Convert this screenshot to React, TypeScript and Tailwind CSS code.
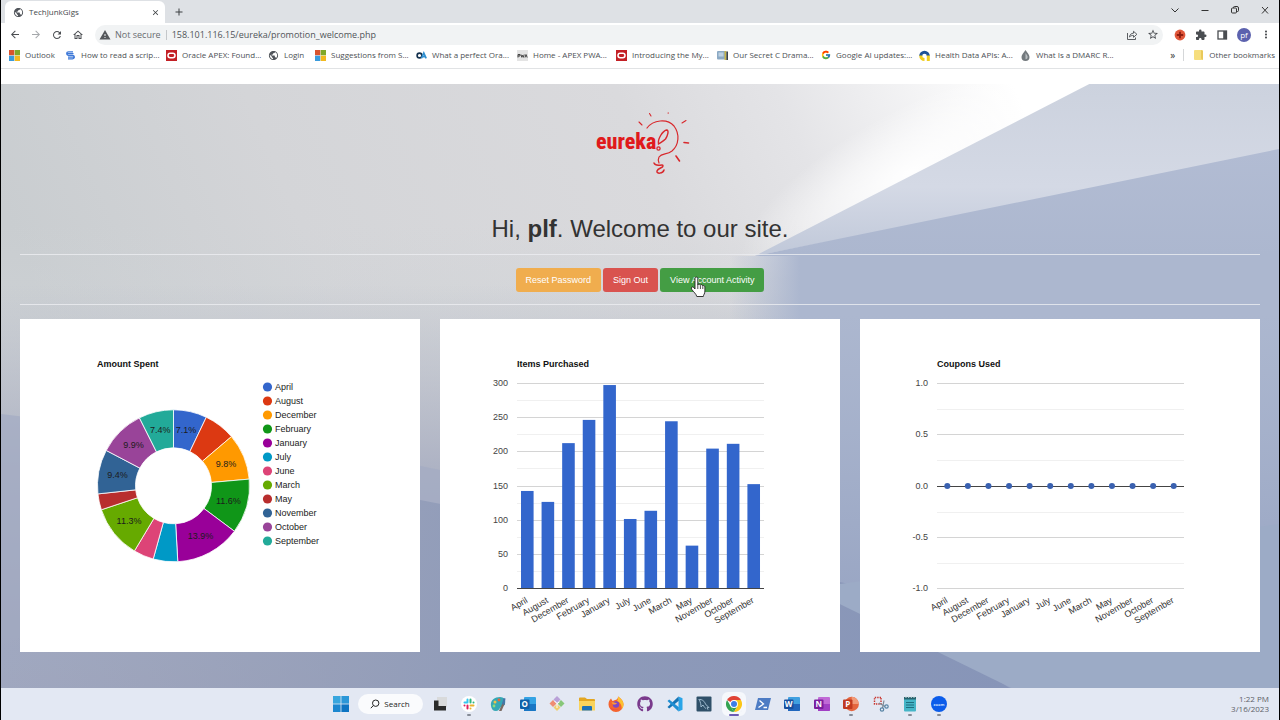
import * as React from "react";
import {
  MdAdd,
  MdArrowBack,
  MdArrowForward,
  MdClose,
  MdExtension,
  MdMoreVert,
  MdOutlineHome,
  MdPublic,
  MdRefresh,
  MdStarBorder,
  MdWarning,
} from "react-icons/md";
import { FcGoogle } from "react-icons/fc";
import { FaGithub } from "react-icons/fa";

const MONTHS = [
  { name: "April", share: 7.1, label: true, items: 142, color: "#3366cc" },
  { name: "August", share: 6.7, label: false, items: 126, color: "#dc3912" },
  { name: "December", share: 9.8, label: true, items: 212, color: "#ff9900" },
  { name: "February", share: 11.6, label: true, items: 246, color: "#109618" },
  { name: "January", share: 13.9, label: true, items: 297, color: "#990099" },
  { name: "July", share: 5.2, label: false, items: 101, color: "#0099c6" },
  { name: "June", share: 4.3, label: false, items: 113, color: "#dd4477" },
  { name: "March", share: 11.3, label: true, items: 244, color: "#66aa00" },
  { name: "May", share: 3.4, label: false, items: 62, color: "#b82e2e" },
  { name: "November", share: 9.4, label: true, items: 204, color: "#316395" },
  { name: "October", share: 9.9, label: true, items: 211, color: "#994499" },
  { name: "September", share: 7.4, label: true, items: 152, color: "#22aa99" },
];

/* Browser chrome */
function IconButton({ label, children }: { label: string; children: React.ReactNode }) {
  return (
    <button type="button" aria-label={label} className="flex size-3 shrink-0 items-center justify-center">
      {children}
    </button>
  );
}

function TabStrip() {
  return (
    <div className="flex h-[23px] items-end justify-between bg-[#dee1e5] pl-1">
      <div className="flex items-center">
        <div className="flex h-[22px] w-40 items-center rounded-t-md bg-white pr-1 pl-2">
          <MdPublic className="size-[11px] shrink-0 text-[#50545a]" />
          <span className="ml-[5px] flex-1 text-[8px] text-[#45494d]">TechJunkGigs</span>
          <IconButton label="Close tab">
            <MdClose className="size-[9px] text-[#3c4043]" />
          </IconButton>
        </div>
        <div className="ml-2">
          <IconButton label="New tab">
            <MdAdd className="size-3 text-[#3c4043]" />
          </IconButton>
        </div>
      </div>
      <div className="flex h-full items-center gap-[18px] pr-2 pb-1 text-[#333]">
        <IconButton label="Search tabs">
          <svg viewBox="0 0 12 12" className="size-3" fill="none" stroke="currentColor">
            <path d="M2.500 4.500 6 8l3.500-3.500" />
          </svg>
        </IconButton>
        <IconButton label="Minimize">
          <svg viewBox="0 0 12 12" className="size-3" fill="none" stroke="currentColor">
            <path d="M2.500 6.500h7" />
          </svg>
        </IconButton>
        <IconButton label="Restore">
          <svg viewBox="0 0 12 12" className="size-3" fill="none" stroke="currentColor">
            <rect x="2.500" y="4" width="5" height="5" rx="1" />
            <path d="M4.500 4V3.500a1 1 0 0 1 1-1h2.500a1.500 1.500 0 0 1 1.500 1.500v2.500a1 1 0 0 1-1 1H8" />
          </svg>
        </IconButton>
        <IconButton label="Close window">
          <svg viewBox="0 0 12 12" className="size-3" fill="none" stroke="currentColor">
            <path d="m3 3 6 6.500M9 3 3 9.500" />
          </svg>
        </IconButton>
      </div>
    </div>
  );
}

function Toolbar() {
  return (
    <div className="flex h-[23px] items-center gap-[9px] pr-[7px] pl-2 text-[#4a4d51]">
      <IconButton label="Back">
        <MdArrowBack className="size-[13px]" />
      </IconButton>
      <IconButton label="Forward">
        <MdArrowForward className="size-[13px] text-[#a5a8ab]" />
      </IconButton>
      <IconButton label="Reload">
        <MdRefresh className="size-3.5" />
      </IconButton>
      <IconButton label="Home">
        <MdOutlineHome className="size-3.5" />
      </IconButton>
      <div className="ml-0.5 flex h-5 flex-1 items-center rounded-full bg-[#f1f3f4] pr-1 pl-1">
        <MdWarning className="size-3 shrink-0 text-[#55585c]" />
        <label htmlFor="url" className="ml-1 shrink-0 border-r border-[#c4c7ca] pr-[5px] text-[9px] leading-[10px] text-[#686c70]">
          Not secure
        </label>
        <input
          id="url"
          type="text"
          defaultValue="158.101.116.15/eureka/promotion_welcome.php"
          className="min-w-0 flex-1 bg-transparent pl-[5px] text-[9px] text-[#505458] outline-none"
        />
        <div className="flex gap-[9px]">
          <IconButton label="Share">
            <svg viewBox="0 0 12 12" className="size-3" fill="none" stroke="currentColor" strokeWidth="0.900">
              <path d="M1.500 4v6.500h8V8.500" />
              <path d="M3.500 8c.3-2.500 1.700-3.700 4-3.800V2.300l3.400 3-3.400 3V6.400C5.800 6.400 4.500 6.800 3.500 8z" />
            </svg>
          </IconButton>
          <IconButton label="Bookmark this tab">
            <MdStarBorder className="size-[13px]" />
          </IconButton>
        </div>
      </div>
      <div className="ml-0.5 flex items-center gap-[9px]">
        <IconButton label="Blocker extension">
          <svg viewBox="0 0 12 12" className="size-3">
            <circle cx="6" cy="6" r="5.400" fill="#e0573a" />
            <path d="M6 2.800v6.400M2.800 6h6.400" stroke="#8e1c10" strokeWidth="1.800" />
          </svg>
        </IconButton>
        <IconButton label="Extensions">
          <MdExtension className="size-3" />
        </IconButton>
        <IconButton label="Side panel">
          <svg viewBox="0 0 12 12" className="size-3">
            <rect x="2" y="2" width="8.500" height="8" fill="none" stroke="currentColor" strokeWidth="1.300" />
            <path d="M7.200 2h3.300v8H7.200z" fill="currentColor" />
          </svg>
        </IconButton>
        <button type="button" className="size-3.5 shrink-0 rounded-full bg-[#5c62ae] text-[8px] leading-[13px] text-white">
          pf
        </button>
        <IconButton label="Menu">
          <MdMoreVert className="size-[13px]" />
        </IconButton>
      </div>
    </div>
  );
}

const MicrosoftIcon = () => (
  <svg viewBox="0 0 11 11" className="size-[11px]">
    <path d="M0 0h5.300v5.300H0z" fill="#d9532c" />
    <path d="M5.700 0H11v5.300H5.700z" fill="#7fa82a" />
    <path d="M0 5.700h5.300V11H0z" fill="#3a9bdc" />
    <path d="M5.700 5.700H11V11H5.700z" fill="#f2b91f" />
  </svg>
);

const OracleIcon = () => (
  <svg viewBox="0 0 11 11" className="size-[11px]">
    <path d="M0 0h11v11H0z" fill="#c32025" />
    <rect x="2" y="3.300" width="7" height="4.400" rx="2.200" fill="none" stroke="#fff" strokeWidth="1.500" />
  </svg>
);

const BOOKMARKS: { text: string; width: string; icon: React.ReactNode }[] = [
  { text: "Outlook", width: "w-14", icon: <MicrosoftIcon /> },
  {
    text: "How to read a scrip...",
    width: "w-[101px]",
    icon: (
      <svg viewBox="0 0 11 11" className="size-[11px]" fill="none" stroke="#3d78d8" strokeWidth="1.300">
        <path d="M8 1.800H3.500a1.700 1.700 0 0 0 0 3.500h4a1.700 1.700 0 0 1 0 3.500H3M1.500 3.600h7M3 7.200h7" />
      </svg>
    ),
  },
  { text: "Oracle APEX: Found...", width: "w-[102px]", icon: <OracleIcon /> },
  { text: "Login", width: "w-[47px]", icon: <MdPublic className="size-[11px] text-[#50545a]" /> },
  { text: "Suggestions from S...", width: "w-[101px]", icon: <MicrosoftIcon /> },
  {
    text: "What a perfect Ora...",
    width: "w-[101px]",
    icon: (
      <svg viewBox="0 0 11 11" className="size-[11px]" fill="none" strokeWidth="1.600">
        <circle cx="3.500" cy="5.500" r="2.400" stroke="#15324f" />
        <path d="M5.500 8.300 7.800 3l2.400 5.300M6.500 6.600h2.800" stroke="#2f8fd0" />
      </svg>
    ),
  },
  {
    text: "Home - APEX PWA...",
    width: "w-[99px]",
    icon: (
      <svg viewBox="0 0 11 11" className="size-[11px]">
        <path d="M0 0h11v11H0z" fill="#e4e4e4" />
        <path d="M1 7.500v-3h2v1.500H1M4 4.500l.8 2.800.8-2 .8 2 .8-2.800M8 7.500l1-3 1.200 3" fill="none" stroke="#444" />
      </svg>
    ),
  },
  { text: "Introducing the My...", width: "w-[101px]", icon: <OracleIcon /> },
  {
    text: "Our Secret C Drama...",
    width: "w-[103px]",
    icon: (
      <svg viewBox="0 0 11 11" className="size-[11px]">
        <rect y="1" width="8.500" height="8.500" rx="1" fill="#8ba9c4" />
        <path d="M1.500 2.500h5v4h-5z" fill="#bcd0e2" />
        <path d="M7.500 1h1.800v9H7.500z" fill="#c6b54a" />
        <path d="M9.300 1.500H11v8.500H9.300z" fill="#39434d" />
      </svg>
    ),
  },
  { text: "Google AI updates:...", width: "w-[99px]", icon: <FcGoogle className="size-[10px]" /> },
  {
    text: "Health Data APIs: A...",
    width: "w-[101px]",
    icon: (
      <svg viewBox="0 0 11 11" className="size-[11px]" fill="none" strokeWidth="3">
        <path d="M1.700 6a3.800 3.800 0 0 1 7.600 0" stroke="#1d5297" />
        <path d="M1.700 5.500c0 2.400 1.600 4 3.800 4M9.300 5.500V11" stroke="#f0cd1e" />
      </svg>
    ),
  },
  {
    text: "What Is a DMARC R...",
    width: "w-[110px]",
    icon: (
      <svg viewBox="0 0 11 11" className="size-[11px]">
        <path d="M5.500 0C7 2.600 9.500 4.500 9.500 7a4 4 0 0 1-8 0C1.500 4.500 4 2.600 5.500 0z" fill="#747a7e" />
        <path d="M5.500 3c.8 1.400 2.200 2.500 2.200 4a2.200 2.200 0 0 1-2.200 2.200z" fill="#b9bec1" />
      </svg>
    ),
  },
];

function BookmarkBar() {
  return (
    <nav aria-label="Bookmarks" className="flex h-[23px] items-center border-b border-[#e1e3e5] pb-1 pl-2 text-[8px] text-[#4c5054]">
      {BOOKMARKS.map((b) => (
        <a key={b.text} href="#" className={`flex shrink-0 items-center gap-[5px] whitespace-nowrap ${b.width}`}>
          <span className="flex w-[11px] justify-center">{b.icon}</span>
          {b.text}
        </a>
      ))}
      <button type="button" className="ml-auto pr-2 text-[10px] leading-3 text-[#333]">
        »
      </button>
      <a href="#" className="flex shrink-0 items-center gap-1.5 border-l border-[#d5d7d9] pr-1 pl-2.5 whitespace-nowrap">
        <svg viewBox="0 0 9 10" className="h-2.5 w-[9px]">
          <rect width="9" height="10" rx="1" fill="#f6de7e" />
          <path d="M7 0v8.500L9 10V1z" fill="#e9c95a" />
        </svg>
        Other bookmarks
      </a>
    </nav>
  );
}

/* Page */
function Wallpaper() {
  return (
    <svg aria-hidden viewBox="0 0 1280 604" preserveAspectRatio="none" className="absolute inset-0 size-full">
      <defs>
        <linearGradient id="silver" x1="0" y1="0.200" x2="1" y2="0">
          <stop offset="0" stopColor="#c9cdd0" />
          <stop offset="0.220" stopColor="#d4d5d8" />
          <stop offset="0.500" stopColor="#dadadd" />
          <stop offset="0.620" stopColor="#e4e4e7" />
          <stop offset="0.800" stopColor="#ffffff" />
        </linearGradient>
        <radialGradient
          id="glow"
          gradientUnits="userSpaceOnUse"
          cx="0"
          cy="0"
          r="1"
          gradientTransform="translate(910 88) rotate(-29) scale(190 62)"
        >
          <stop offset="0" stopColor="#fff" stopOpacity="0.950" />
          <stop offset="0.500" stopColor="#fff" stopOpacity="0.550" />
          <stop offset="1" stopColor="#fff" stopOpacity="0" />
        </radialGradient>
        <linearGradient id="light" x1="0" y1="0" x2="0" y2="1">
          <stop offset="0" stopColor="#ccd2de" />
          <stop offset="0.600" stopColor="#d4d9e5" />
          <stop offset="1" stopColor="#c0c8d9" />
        </linearGradient>
        <linearGradient id="dusk" x1="0" y1="0" x2="0" y2="1">
          <stop offset="0" stopColor="#b2bcd3" />
          <stop offset="1" stopColor="#acb7cf" />
        </linearGradient>
        <linearGradient id="haze" x1="0" y1="0" x2="0" y2="1">
          <stop offset="0" stopColor="#cfd3d7" stopOpacity="0" />
          <stop offset="0.250" stopColor="#cfd3d7" stopOpacity="0.600" />
        </linearGradient>
        <linearGradient id="fade" x1="0" y1="0" x2="0" y2="1">
          <stop offset="0" stopColor="#b4b8c6" stopOpacity="0" />
          <stop offset="0.450" stopColor="#aeb3c4" />
          <stop offset="1" stopColor="#989eb5" />
        </linearGradient>
        <linearGradient id="side" gradientUnits="userSpaceOnUse" x1="730" y1="0" x2="800" y2="0">
          <stop offset="0" stopColor="#acb7cf" stopOpacity="0" />
          <stop offset="1" stopColor="#acb7cf" />
        </linearGradient>
        <linearGradient id="shade" x1="0" y1="0" x2="0" y2="1">
          <stop offset="0" stopColor="#98a5c3" stopOpacity="0" />
          <stop offset="1" stopColor="#929fbf" />
        </linearGradient>
        <linearGradient id="floor" x1="0" y1="0" x2="1" y2="0">
          <stop offset="0" stopColor="#989db3" stopOpacity="0" />
          <stop offset="0.500" stopColor="#8f9bb9" />
          <stop offset="1" stopColor="#8795b8" />
        </linearGradient>
      </defs>
      <path d="M0 0h1280v604H0z" fill="url(#silver)" />
      <path d="M0 140h1280v464H0z" fill="url(#haze)" />
      <path d="M600 0h680v235H600z" fill="url(#glow)" />
      <path d="M0 200h1280v404H0z" fill="url(#fade)" />
      <path d="M755 172 1090 0h190v70z" fill="url(#light)" />
      <path d="M755 172 1280 65v107z" fill="url(#dusk)" />
      <path d="M720 172h560v432H720z" fill="url(#side)" />
      <path d="M755 230h525v374H755z" fill="url(#shade)" />
      <path d="M0 330 420 382l335 66v156H0z" fill="#a3abc3" fillOpacity="0.700" />
      <path d="M0 560 420 416l430 84 160 104H0z" fill="url(#floor)" />
      <path d="m840 500 440-60v164h-268L840 520z" fill="#9cabc6" />
    </svg>
  );
}

function EurekaLogo() {
  return (
    <svg role="img" aria-label="eureka" viewBox="0 0 96 62" className="h-[62px] w-24 overflow-visible">
      <text
        x="4"
        y="37"
        fill="#e01a1c"
        fontSize="22"
        fontWeight="800"
        fontFamily="'Liberation Sans Narrow', 'Roboto Condensed', Roboto, sans-serif"
      >
        eureka
      </text>
      <g fill="none" stroke="#d8282c" strokeLinecap="round">
        <path d="M55 16C61 8 75 6 82 14c6 8 5 19-2 25-5 4-10 2-13 6-1 2-1 4 0 6" strokeWidth="1.200" />
        <path d="M66.500 32c-1-5 4-13 8-14 3 0 1 6-1 9-2 2-4 3-7 5z" strokeWidth="1.400" />
        <circle cx="66.500" cy="36.500" r="1.600" strokeWidth="1.300" />
        <path d="M62 51c2 5 9 0 9 3 0 2-5 2-6 5-1 3 6 3 7-1" strokeWidth="1.500" />
        <path d="m47 10 3 3M57.500 1.500 59 4M76 1h.5M90 11l4-2.500" strokeWidth="1.100" />
        <path d="m84 44 3.500 5M92 30.500l4.500.5" strokeWidth="1.600" />
      </g>
    </svg>
  );
}

function HandCursor() {
  return (
    <svg aria-hidden viewBox="0 0 16 22" className="pointer-events-none absolute top-2 left-[30px] h-[22px] w-4">
      <path
        d="M5 13V2.500a1.400 1.400 0 0 1 2.800 0V9c.2-1.300 2.500-1.200 2.600.3.400-1 2.300-.8 2.400.6.500-.7 2.100-.4 2.100 1V15c0 3-1.400 3.500-1.600 5.500H6.800C6.300 18 3.500 16 1.600 13.200.6 11.500 2.300 10.300 3.400 11.300z"
        fill="#fff"
        stroke="#222"
        strokeWidth="0.900"
      />
      <path d="M7.800 9v4M10.400 9.500v3.500M12.800 10.200V13" stroke="#222" strokeWidth="0.800" />
    </svg>
  );
}

function ChartCard({ title, children }: { title: string; children: React.ReactNode }) {
  return (
    <section className="bg-white">
      <svg
        role="img"
        aria-label={title}
        viewBox="0 0 400 333"
        className="w-full text-[9px]"
        fontFamily="'Liberation Sans', Arial, sans-serif"
      >
        <text x="77" y="48" fontWeight="700" fill="#111">
          {title}
        </text>
        {children}
      </svg>
    </section>
  );
}

function polar(cx: number, cy: number, r: number, share: number) {
  const a = (share / 100) * Math.PI * 2;
  return [cx + r * Math.sin(a), cy - r * Math.cos(a)];
}

function DonutChart() {
  const cx = 153.5;
  const cy = 166.8;
  let start = 0;
  return (
    <ChartCard title="Amount Spent">
      {MONTHS.map((m) => {
        const end = start + m.share;
        const [x1, y1] = polar(cx, cy, 76, start);
        const [x2, y2] = polar(cx, cy, 76, end);
        const [x3, y3] = polar(cx, cy, 38, end);
        const [x4, y4] = polar(cx, cy, 38, start);
        const [tx, ty] = polar(cx, cy, 57, start + m.share / 2);
        start = end;
        return (
          <g key={m.name}>
            <path
              d={`M${x1} ${y1}A76 76 0 0 1 ${x2} ${y2}L${x3} ${y3}A38 38 0 0 0 ${x4} ${y4}z`}
              fill={m.color}
              stroke="#fff"
              strokeWidth="0.800"
            />
            {m.label && (
              <text x={tx} y={ty + 3} textAnchor="middle" fill="#1c1c1c">
                {m.share.toFixed(1)}%
              </text>
            )}
          </g>
        );
      })}
      {MONTHS.map((m, i) => (
        <g key={m.name}>
          <circle cx="247.500" cy={68 + i * 14} r="4.600" fill={m.color} />
          <text x="255" y={71 + i * 14} fill="#222">
            {m.name}
          </text>
        </g>
      ))}
    </ChartCard>
  );
}

const PLOT = { left: 77, right: 324, top: 64, bottom: 269 };
const STEP = (PLOT.right - PLOT.left) / MONTHS.length;

function Axes({ ticks, zeroIndex }: { ticks: string[]; zeroIndex: number }) {
  const gap = (PLOT.bottom - PLOT.top) / (ticks.length - 1);
  return (
    <g>
      {ticks.map((t, i) => {
        const y = Math.round(PLOT.top + gap * i);
        return (
          <g key={t}>
            <path d={`M${PLOT.left} ${y + 0.5}H${PLOT.right}`} stroke={i === zeroIndex ? "#444" : "#d4d4d4"} />
            {i < ticks.length - 1 && (
              <path d={`M${PLOT.left} ${Math.round(y + gap / 2) + 0.5}H${PLOT.right}`} stroke="#f0f0f0" />
            )}
            <text x="68" y={y + 3} textAnchor="end" fill="#444">
              {t}
            </text>
          </g>
        );
      })}
      {MONTHS.map((m, i) => {
        const x = PLOT.left + STEP * (i + 0.5) + 1;
        return (
          <text key={m.name} x={x} y="283" textAnchor="end" fill="#333" transform={`rotate(-30 ${x} 283)`}>
            {m.name}
          </text>
        );
      })}
    </g>
  );
}

function BarChart() {
  const scale = (PLOT.bottom - PLOT.top) / 300;
  return (
    <ChartCard title="Items Purchased">
      <Axes ticks={["300", "250", "200", "150", "100", "50", "0"]} zeroIndex={6} />
      {MONTHS.map((m, i) => (
        <rect
          key={m.name}
          x={PLOT.left + STEP * (i + 0.5) - 6.3}
          y={PLOT.bottom - m.items * scale}
          width="12.600"
          height={m.items * scale}
          fill="#3366cc"
        />
      ))}
    </ChartCard>
  );
}

function LineChart() {
  return (
    <ChartCard title="Coupons Used">
      <Axes ticks={["1.0", "0.5", "0.0", "-0.5", "-1.0"]} zeroIndex={2} />
      {MONTHS.map((m, i) => (
        <circle key={m.name} cx={PLOT.left + STEP * (i + 0.5)} cy="167" r="3" fill="#3a61b0" />
      ))}
    </ChartCard>
  );
}

/* Taskbar */
function OfficeIcon({ letter, dark, light, mid }: { letter: string; dark: string; light: string; mid: string }) {
  return (
    <svg viewBox="0 0 16 16" className="size-4">
      <rect x="4" y="1" width="12" height="14" rx="1" fill={light} />
      <path d="M4 8h12v6a1 1 0 0 1-1 1H4z" fill={mid} />
      <rect y="3.500" width="9.500" height="9.500" rx="1" fill={dark} />
      <text x="4.700" y="11" textAnchor="middle" fontSize="8" fontWeight="700" fill="#fff">
        {letter}
      </text>
    </svg>
  );
}

const APPS: { name: string; running?: boolean; active?: boolean; icon: React.ReactNode }[] = [
  {
    name: "Task view",
    icon: (
      <svg viewBox="0 0 16 16" className="size-4">
        <path d="M5 1h10v10H5z" fill="#d9dadb" />
        <path d="M2 4.500h4.500V10H14v4.500H2z" fill="#2b2b2b" />
      </svg>
    ),
  },
  {
    name: "Slack",
    running: true,
    icon: (
      <svg viewBox="0 0 16 16" className="size-4">
        <circle cx="8" cy="8" r="8" fill="#fff" />
        <g strokeWidth="2" strokeLinecap="round">
          <path d="M6.500 3.500v3M3.500 6.500h3" stroke="#36c5f0" />
          <path d="M9.500 3.500v3M12.500 6.500h.01" stroke="#2eb67d" />
          <path d="M12.500 9.500h-3M9.500 12.500h.01" stroke="#ecb22e" />
          <path d="M6.500 12.500v-3M3.500 9.500h.01" stroke="#e01e5a" />
        </g>
      </svg>
    ),
  },
  {
    name: "Paint",
    icon: (
      <svg viewBox="0 0 16 16" className="size-4">
        <path d="M1 10C0 4 5 1 10 1c4 0 6 3 5 7-1 3-4 2-5 4s-2 3-4 3c-3 0-4.500-2-5-5z" fill="#35a8b5" />
        <circle cx="5" cy="6" r="1.500" fill="#f0c14a" />
        <circle cx="9" cy="4" r="1.400" fill="#e4683f" />
        <circle cx="4" cy="10" r="1.400" fill="#8edb7c" />
        <path d="m9 15 4-9 2 1-3.500 8z" fill="#7b6a62" />
        <path d="m12 8 1.500-6 2 .5L14.500 9z" fill="#4475a8" />
      </svg>
    ),
  },
  { name: "Outlook", icon: <OfficeIcon letter="O" dark="#0f5fa8" light="#35a3e4" mid="#1976c4" /> },
  {
    name: "Git",
    icon: (
      <svg viewBox="0 0 16 16" className="size-4">
        <path d="M8 0 4.500 3.500 8 7l3.500-3.500z" fill="#b9a1d8" />
        <path d="M4 4 .5 7.500 4 11l3.500-3.500z" fill="#ef8d73" />
        <path d="m12 4-3.500 3.500L12 11l3.500-3.500z" fill="#87c779" />
        <path d="m8 8-3.500 3.500L8 15l3.500-3.500z" fill="#efcf71" />
        <path d="M5.500 5 8 7.500V12M8 7.500 10.500 6" stroke="#fff" fill="none" />
      </svg>
    ),
  },
  {
    name: "File Explorer",
    icon: (
      <svg viewBox="0 0 16 16" className="size-4">
        <path d="M0 2.500a1 1 0 0 1 1-1h5L8 3h7a1 1 0 0 1 1 1v10H0z" fill="#e3a621" />
        <path d="M0 5h16v9.500H0z" fill="#f9d35c" />
        <path d="M3 14.500V11a1 1 0 0 1 1-1h8a1 1 0 0 1 1 1v3.500z" fill="#1b71b8" />
      </svg>
    ),
  },
  {
    name: "Firefox",
    icon: (
      <svg viewBox="0 0 16 16" className="size-4">
        <path d="M10 .500c2 1.500 5.500 3.500 5.500 8a7.500 7.500 0 0 1-15 0C.5 5.500 1.500 4 3 2.500L4.500 5C7 4 10 4 10 .500z" fill="#f5642f" />
        <path d="M10 .500c2 1.500 5.500 3.500 5.500 8 0 2-.7 3.500-1.700 4.700C14 9 12 6 9 5c1-1.500 1-3 1-4.500z" fill="#fcc12f" />
        <path d="M.600 9c1 3.500 4 5.500 7.500 5 3-.3 4.500-2 5.700-3.500A7.500 7.500 0 0 1 .600 9z" fill="#e12b61" />
        <circle cx="8" cy="8.500" r="3.200" fill="#7d47c6" />
        <path d="M3.500 6.500C6 5.500 7 7 9 7c-1 2-3 1.500-4 1.500z" fill="#ff9a36" />
      </svg>
    ),
  },
  { name: "GitHub Desktop", icon: <FaGithub className="size-4 text-[#7a3a8c]" /> },
  {
    name: "Visual Studio Code",
    icon: (
      <svg viewBox="0 0 16 16" className="size-4">
        <path d="M11.500.500 15.500 2.200v11.600l-4 1.700z" fill="#2aa5e8" />
        <path d="m11.500.500.3 4.300L2.200 12.500.500 11z" fill="#1474b5" />
        <path d="m11.500 15.500.3-4.300L2.200 3.500.500 5z" fill="#1f8fd3" />
      </svg>
    ),
  },
  {
    name: "MySQL Workbench",
    icon: (
      <svg viewBox="0 0 16 16" className="size-4">
        <rect x="0.500" y="0.500" width="15" height="15" rx="1" fill="#2f5069" />
        <path d="M2.500 3.500c4-.5 6 2 7 4.500.5 1.500 2 1.500 3.500 3.500l-2 .2 1 2M3.500 4c1 3 1.500 4 1.500 7l2-2c1 2 2 3 3 3.500" fill="none" stroke="#9ebace" />
      </svg>
    ),
  },
  {
    name: "Google Chrome",
    active: true,
    icon: (
      <svg viewBox="0 0 16 16" className="size-4">
        <path d="M8 8 1.070 4A8 8 0 0 1 14.930 4z" fill="#e04336" />
        <path d="m1.070 4 3.470 6L8 16A8 8 0 0 1 1.070 4z" fill="#34a352" />
        <path d="m8 16 3.460-6H4.540z" fill="#34a352" />
        <path d="m8 16 3.460-6L8 4h6.930A8 8 0 0 1 8 16z" fill="#fbc617" />
        <circle cx="8" cy="8" r="3.900" fill="#fff" />
        <circle cx="8" cy="8" r="3" fill="#3c7de6" />
      </svg>
    ),
  },
  {
    name: "PowerShell",
    icon: (
      <svg viewBox="0 0 16 16" className="size-4">
        <path d="M3 2h13l-3 12H0z" fill="#4d7cc4" />
        <path d="m4.500 4.500 4 3.500-5 3.500M8.500 11.500H12" fill="none" stroke="#fff" strokeWidth="1.300" />
      </svg>
    ),
  },
  { name: "Word", icon: <OfficeIcon letter="W" dark="#184f9e" light="#40a0e0" mid="#2166bd" /> },
  { name: "OneNote", icon: <OfficeIcon letter="N" dark="#7a1e9e" light="#c06ad6" mid="#a13fc4" /> },
  {
    name: "PowerPoint",
    running: true,
    icon: (
      <svg viewBox="0 0 16 16" className="size-4">
        <circle cx="8.700" cy="8" r="7.200" fill="#e4663f" />
        <path d="M8.700.800A7.200 7.200 0 0 1 15.900 8H8.700z" fill="#f19a78" />
        <rect y="3.500" width="9.500" height="9.500" rx="1" fill="#c13a20" />
        <text x="4.700" y="11" textAnchor="middle" fontSize="8" fontWeight="700" fill="#fff">
          P
        </text>
      </svg>
    ),
  },
  {
    name: "Snipping Tool",
    icon: (
      <svg viewBox="0 0 16 16" className="size-4" fill="none">
        <path d="M8 1.500H1.500V8H8z" stroke="#c9342d" strokeWidth="1.400" strokeDasharray="1.400 1" />
        <path d="m6 7 6 3.500M11 4.500 9.500 12" stroke="#7b8894" strokeWidth="1.200" />
        <circle cx="13.500" cy="10.500" r="1.700" stroke="#5784a5" strokeWidth="1.200" />
        <circle cx="9" cy="13.500" r="1.700" stroke="#5784a5" strokeWidth="1.200" />
      </svg>
    ),
  },
  {
    name: "Notepad",
    running: true,
    icon: (
      <svg viewBox="0 0 16 16" className="size-4">
        <rect x="2" y="1" width="12" height="14.500" rx="1" fill="#45b5c7" />
        <path d="M2 1h12v2.500H2z" fill="#28636e" />
        <path d="M4 6.500h8M4 9h8M4 11.500h8" stroke="#1d6f80" />
        <path d="M4 0v2M6.700 0v2M9.300 0v2M12 0v2" stroke="#cfdcdf" />
      </svg>
    ),
  },
  {
    name: "Zoom",
    running: true,
    icon: (
      <svg viewBox="0 0 16 16" className="size-4">
        <circle cx="8" cy="8" r="8" fill="#0b5cea" />
        <text x="8" y="9.500" textAnchor="middle" fontSize="4" fontWeight="700" fill="#cfe0ff">
          zoom
        </text>
      </svg>
    ),
  },
];

function Taskbar() {
  return (
    <footer className="flex h-8 items-center bg-[#e3e8f3] text-[8px]">
      <div className="flex-1" />
      <div className="flex items-center gap-[9px]">
        <button type="button" aria-label="Start">
          <svg viewBox="0 0 16 16" className="size-4">
            <path d="M0 0h7.600v7.600H0z" fill="#38a6de" />
            <path d="M8.400 0H16v7.600H8.400z" fill="#2b97d8" />
            <path d="M0 8.400h7.600V16H0z" fill="#1c87cf" />
            <path d="M8.400 8.400H16V16H8.400z" fill="#0d74c2" />
          </svg>
        </button>
        <button type="button" className="flex h-5 w-[65px] items-center justify-center gap-1 rounded-full bg-[#fafbfd] text-[#222]">
          <svg viewBox="0 0 10 10" className="size-2.5" fill="none" stroke="currentColor">
            <circle cx="5.700" cy="4.200" r="3.200" />
            <path d="M3.400 6.500.800 9.200" />
          </svg>
          Search
        </button>
        <div className="flex w-[516px] justify-between">
          {APPS.map((app) => (
            <button
              key={app.name}
              type="button"
              aria-label={app.name}
              className={
                app.active
                  ? "relative flex size-4 items-center justify-center rounded-xs bg-[#f6f8fc] outline-4 outline-[#f6f8fc]"
                  : "relative flex size-4 items-center justify-center"
              }
            >
              {app.icon}
              {app.active && <span className="absolute -bottom-1 h-0.5 w-2.5 rounded-full bg-[#6b5bb5]" />}
              {app.running && <span className="absolute -bottom-1 h-0.5 w-1 rounded-full bg-[#858b96]" />}
            </button>
          ))}
        </div>
      </div>
      <div className="flex-1 text-right leading-[10px] text-[#5d6168]">
        <div className="pr-2.5">1:22 PM</div>
        <div className="pr-2.5">3/16/2023</div>
      </div>
    </footer>
  );
}

export default function App() {
  return (
    <div className="flex min-h-screen flex-col border-x border-black bg-white font-['Open_Sans','Noto_Sans',sans-serif]">
      <header>
        <TabStrip />
        <Toolbar />
        <BookmarkBar />
      </header>
      <main className="relative mt-[15px] flex-1 font-['Liberation_Sans',Arial,sans-serif]">
        <Wallpaper />
        <div className="relative px-[19px] pt-7 pb-9">
          <div className="flex justify-center">
            <EurekaLogo />
          </div>
          <h1 className="mt-[39px] text-center text-[24px] leading-8 text-[#333]">
            Hi, <b>plf</b>. Welcome to our site.
          </h1>
          <div className="mt-[9px] flex flex-wrap justify-center gap-0.5 border-y border-[#eceef1]/80 pt-[13px] pb-3 text-[9px] leading-6 text-white">
            <button type="button" className="rounded-[3px] bg-[#f0ad4e] px-2.5">
              Reset Password
            </button>
            <button type="button" className="rounded-[3px] bg-[#d9534f] px-2.5">
              Sign Out
            </button>
            <button type="button" className="relative rounded-[3px] bg-[#449d44] px-2.5">
              View Account Activity
              <HandCursor />
            </button>
          </div>
          <div className="mt-3.5 grid grid-cols-3 gap-5">
            <DonutChart />
            <BarChart />
            <LineChart />
          </div>
        </div>
      </main>
      <Taskbar />
    </div>
  );
}
